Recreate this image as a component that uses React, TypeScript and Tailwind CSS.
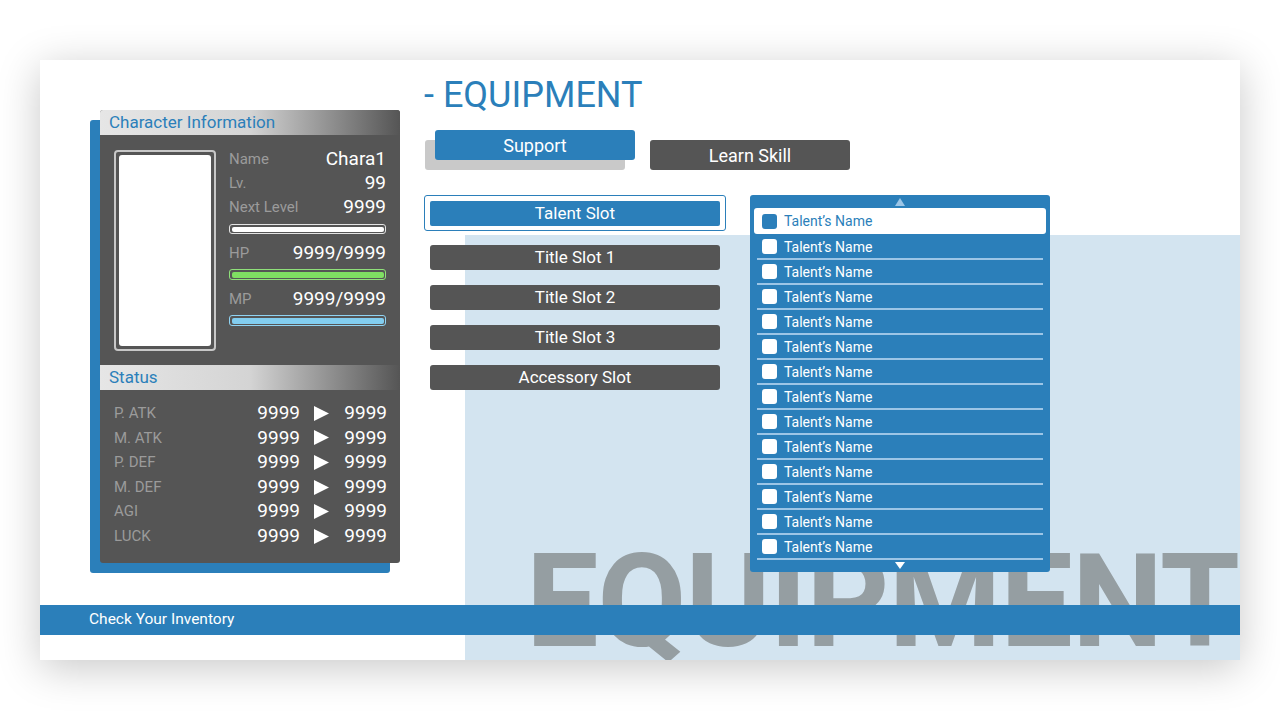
import React from 'react';

const infoRows = [
  { label: 'Name', value: 'Chara1' },
  { label: 'Lv.', value: '99' },
  { label: 'Next Level', value: '9999' },
];

const statusRows = ['P. ATK', 'M. ATK', 'P. DEF', 'M. DEF', 'AGI', 'LUCK'];

const slots = ['Title Slot 1', 'Title Slot 2', 'Title Slot 3', 'Accessory Slot'];

const talents = Array.from({ length: 13 }, () => 'Talent’s Name');

function Bar({ border, fill }: { border: string; fill: string }) {
  return (
    <div className={`rounded-[3px] border p-[1.5px] ${border}`}>
      <div className={`h-full rounded-[2px] ${fill}`} />
    </div>
  );
}

function Play() {
  return (
    <svg width="15" height="15" viewBox="0 0 15 15" className="shrink-0">
      <polygon points="0,0 15,7.5 0,15" fill="#ffffff" />
    </svg>
  );
}

export default function App() {
  return (
    <div className="min-h-screen w-full bg-white pt-[60px] px-[40px] font-['Roboto',sans-serif]">
      <div className="relative w-[1200px] h-[600px] overflow-hidden bg-white shadow-[0_8px_40px_rgba(0,0,0,0.22)]">
        {/* backdrop */}
        <div className="absolute left-[425px] top-[175px] right-0 bottom-0 bg-[#d3e4f0]" />
        <div className="absolute left-[486px] top-[477px] text-[129px] leading-none font-bold tracking-[-1px] text-[#959ea2] whitespace-nowrap">
          EQUIPMENT
        </div>

        <div className="relative flex flex-col h-full">
          <div className="flex h-[545px]">
            {/* Character panel */}
            <div className="ml-[60px] mt-[50px] w-[300px] h-[453px] shrink-0 bg-[#555555] rounded-[3px] shadow-[-10px_10px_0_0_#2b7fba] flex flex-col">
              <div className="h-[25px] rounded-t-[3px] bg-[linear-gradient(to_right,#e6e6e6_0%,#d4d4d4_50%,#555555_100%)] pl-[9px] text-[17px] leading-[25px] text-[#2b7fba]">
                Character Information
              </div>
              <div className="h-[230px] flex pl-[14px]">
                <div className="mt-[15px] w-[102px] h-[201px] rounded-[4px] border-2 border-[#c8c8c8] p-[3px]">
                  <div className="h-full rounded-[3px] bg-white" />
                </div>
                <div className="ml-[13px] mt-[12px] w-[157px] flex flex-col">
                  {infoRows.map((r) => (
                    <div key={r.label} className="h-[24px] flex items-center justify-between">
                      <span className="text-[15px] text-[#9b9b9b]">{r.label}</span>
                      <span className="text-[19px] text-white">{r.value}</span>
                    </div>
                  ))}
                  <div className="mt-[5px] h-[10px]">
                    <Bar border="h-full border-[#e4e4e4]" fill="bg-white" />
                  </div>
                  <div className="mt-[7px] h-[24px] flex items-center justify-between">
                    <span className="text-[15px] text-[#9b9b9b]">HP</span>
                    <span className="text-[19px] text-white">9999/9999</span>
                  </div>
                  <div className="mt-[4px] h-[11px]">
                    <Bar border="h-full border-[#8fe07a]" fill="bg-[#7fdf62]" />
                  </div>
                  <div className="mt-[7px] h-[24px] flex items-center justify-between">
                    <span className="text-[15px] text-[#9b9b9b]">MP</span>
                    <span className="text-[19px] text-white">9999/9999</span>
                  </div>
                  <div className="mt-[4px] h-[11px]">
                    <Bar border="h-full border-[#8fd3f3]" fill="bg-[#82cdef]" />
                  </div>
                </div>
              </div>
              <div className="h-[25px] bg-[linear-gradient(to_right,#e6e6e6_0%,#d4d4d4_50%,#555555_100%)] pl-[9px] text-[17px] leading-[25px] text-[#2b7fba]">
                Status
              </div>
              <div className="pt-[11px] pl-[14px] pr-[13px] flex flex-col">
                {statusRows.map((s) => (
                  <div key={s} className="h-[24.6px] flex items-center">
                    <span className="flex-1 text-[15px] text-[#9b9b9b]">{s}</span>
                    <span className="w-[45px] text-right text-[19px] text-white">9999</span>
                    <span className="ml-[14px]"><Play /></span>
                    <span className="ml-[14px] w-[44px] text-right text-[19px] text-white">9999</span>
                  </div>
                ))}
              </div>
            </div>

            {/* Right area */}
            <div className="ml-[24px] flex flex-col">
              <div className="mt-[10px] h-[50px] flex items-center text-[36px] leading-none text-[#2b7fba] whitespace-nowrap">
                - EQUIPMENT
              </div>
              <div className="mt-[10px] h-[40px] flex items-start">
                <button className="ml-[11px] w-[200px] h-[30px] shrink-0 rounded-[3px] bg-[#2b7fba] shadow-[-10px_10px_0_0_#c9c9c9] text-[18px] text-white">
                  Support
                </button>
                <button className="ml-[15px] mt-[10px] w-[200px] h-[30px] shrink-0 rounded-[3px] bg-[#555555] text-[18px] text-white">
                  Learn Skill
                </button>
              </div>
              <div className="mt-[25px] flex items-start">
                <div className="w-[302px] flex flex-col">
                  <div className="h-[36px] rounded-[3px] border border-[#2b7fba] bg-white flex items-center px-[5px]">
                    <div className="w-full h-[25px] rounded-[2px] bg-[#2b7fba] flex items-center justify-center text-[17px] leading-none text-white">
                      Talent Slot
                    </div>
                  </div>
                  <div className="mt-[14px] flex flex-col gap-[15px]">
                    {slots.map((s) => (
                      <div key={s} className="ml-[6px] w-[290px] h-[25px] rounded-[3px] bg-[#555555] flex items-center justify-center text-[17px] leading-none text-white">
                        {s}
                      </div>
                    ))}
                  </div>
                </div>

                {/* Talent list */}
                <div className="ml-[24px] w-[300px] rounded-[3px] bg-[#2b7fba] pt-[3px] pb-[3px] flex flex-col">
                  <div className="h-[8px] flex justify-center">
                    <svg width="10" height="8" viewBox="0 0 10 8">
                      <polygon points="5,0 10,8 0,8" fill="#9cc5e6" />
                    </svg>
                  </div>
                  <div className="mt-[2px] mx-[4px] h-[26px] rounded-[3px] bg-white flex items-center pl-[8px]">
                    <div className="w-[15px] h-[15px] rounded-[3px] bg-[#2b7fba]" />
                    <span className="ml-[7px] text-[14px] leading-none text-[#2b7fba]">Talent’s Name</span>
                  </div>
                  <div className="mt-[1px] mx-[7px] flex flex-col">
                    {talents.map((t, i) => (
                      <div key={i} className="h-[25px] border-b-2 border-[#9cc5e6] flex items-center pl-[5px]">
                        <div className="w-[15px] h-[15px] rounded-[3px] bg-white" />
                        <span className="ml-[7px] text-[14px] leading-none text-white">{t}</span>
                      </div>
                    ))}
                  </div>
                  <div className="mt-[2px] h-[7px] flex justify-center">
                    <svg width="10" height="7" viewBox="0 0 10 7">
                      <polygon points="0,0 10,0 5,7" fill="#ffffff" />
                    </svg>
                  </div>
                </div>
              </div>
            </div>
          </div>

          <div className="h-[30px] bg-[#2b7fba] flex items-center pl-[49px] text-[15.5px] text-white">
            Check Your Inventory
          </div>
        </div>
      </div>
    </div>
  );
}
